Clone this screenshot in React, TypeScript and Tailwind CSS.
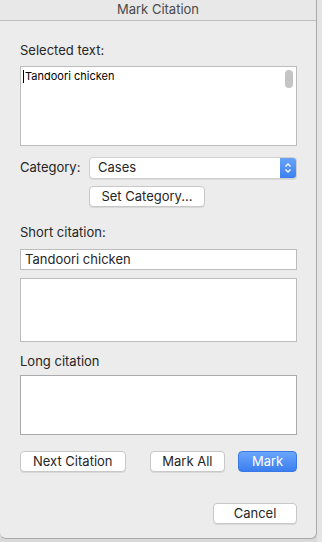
import React from 'react';

const font = { fontFamily: 'Inter, "Liberation Sans", sans-serif' };

function Button({ label, className = '', primary = false }: { label: string; className?: string; primary?: boolean }) {
  return (
    <button
      className={`h-[21px] rounded-[4px] text-[13px] leading-none flex items-center justify-center ${
        primary
          ? 'bg-gradient-to-b from-[#6aa6fa] to-[#3b7ef0] text-white border border-[#3a78e6]'
          : 'bg-white text-[#262626] border border-[#c8c8c8] shadow-[0_1px_0_rgba(0,0,0,0.08)]'
      } ${className}`}
    >
      {label}
    </button>
  );
}

export default function App() {
  return (
    <div className="w-[322px] h-[542px] flex bg-[#d9d9d9] overflow-hidden" style={font}>
      {/* Dialog */}
      <div className="w-[317px] h-[539px] bg-[#ececec] border-r border-b border-[#a9a9a9] rounded-b-[6px] flex flex-col">
        <div className="h-[21px] shrink-0 border-b border-[#bdbdbd] bg-[#e8e8e8] flex items-center justify-center text-[13px] text-[#4a4a4a]">
          Mark Citation
        </div>

        <div className="flex flex-col pl-[20px] pr-[19px]">
          <div className="mt-[21px] text-[13px] text-[#262626] leading-[16px]">Selected text:</div>
          <div className="mt-[8px] h-[80px] bg-white border border-[#bcbcbc] relative px-[2px] pt-[3px]">
            <div className="text-[11px] leading-[13px] text-black flex">
              <span className="w-px h-[13px] bg-black mr-px" />
              Tandoori chicken
            </div>
            <div className="absolute right-[3px] top-[3px] w-[8px] h-[18px] rounded-full bg-[#c4c4c4]" />
          </div>

          <div className="mt-[11px] flex items-center">
            <div className="w-[69px] text-[13px] text-[#262626]">Category:</div>
            <div className="flex-1 h-[22px] bg-white border border-[#cfcfcf] rounded-[4px] flex items-center overflow-hidden shadow-[0_1px_0_rgba(0,0,0,0.08)]">
              <span className="flex-1 pl-[8px] text-[13px] text-[#262626]">Cases</span>
              <div className="w-[16px] h-full bg-gradient-to-b from-[#68a3f8] to-[#3c7ff0] flex items-center justify-center">
                <svg width="8" height="12" viewBox="0 0 8 12" fill="none" stroke="white" strokeWidth="1.3">
                  <path d="M1.5 4.5 L4 2 L6.5 4.5" />
                  <path d="M1.5 7.5 L4 10 L6.5 7.5" />
                </svg>
              </div>
            </div>
          </div>

          <div className="mt-[7px] pl-[69px] flex">
            <Button label="Set Category..." className="w-[116px]" />
          </div>

          <div className="mt-[17px] text-[13px] text-[#262626] leading-[16px]">Short citation:</div>
          <div className="mt-[9px] h-[21px] bg-white border border-[#bcbcbc] flex items-center px-[4px] text-[13px] text-[#262626]">
            Tandoori chicken
          </div>
          <div className="mt-[8px] h-[64px] bg-white border border-[#bcbcbc]" />

          <div className="mt-[11px] text-[13px] text-[#262626] leading-[16px]">Long citation</div>
          <div className="mt-[6px] h-[60px] bg-white border border-[#aaaaaa]" />

          <div className="mt-[16px] flex items-center">
            <Button label="Next Citation" className="w-[106px]" />
            <Button label="Mark All" className="w-[76px] ml-[24px]" />
            <Button label="Mark" primary className="w-[59px] ml-[13px]" />
          </div>

          <div className="mt-[31px] flex justify-end">
            <Button label="Cancel" className="w-[84px]" />
          </div>
        </div>
      </div>
      {/* Window behind */}
      <div className="flex-1 bg-[#e4e4e4]" />
    </div>
  );
}
